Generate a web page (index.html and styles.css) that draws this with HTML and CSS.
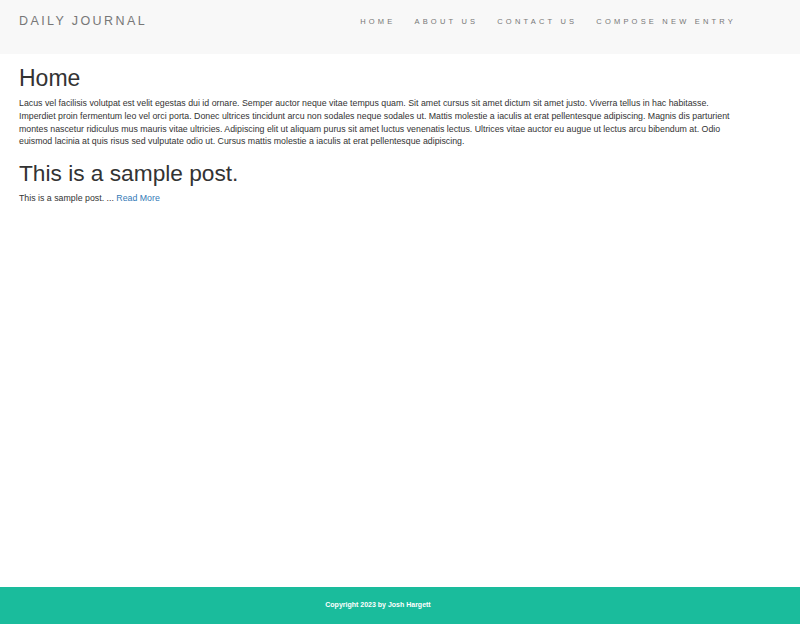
FILE: index.html
```html
<!DOCTYPE html>
<html lang="en">
  <head>
    <meta charset="UTF-8" />
    <title>Daily Journal</title>
    <link rel="stylesheet" href="styles.css">
  </head>
  <body>
    <nav class="navbar">
      <a class="brand" href="#">DAILY JOURNAL</a>
      <ul class="nav-links">
        <li><a href="#">HOME</a></li>
        <li><a href="#">ABOUT US</a></li>
        <li><a href="#">CONTACT US</a></li>
        <li><a href="#">COMPOSE NEW ENTRY</a></li>
      </ul>
    </nav>

    <div class="container">
      <h1>Home</h1>
      <p>Lacus vel facilisis volutpat est velit egestas dui id ornare. Semper auctor neque vitae tempus quam. Sit amet cursus sit amet dictum sit amet justo. Viverra tellus in hac habitasse. Imperdiet proin fermentum leo vel orci porta. Donec ultrices tincidunt arcu non sodales neque sodales ut. Mattis molestie a iaculis at erat pellentesque adipiscing. Magnis dis parturient montes nascetur ridiculus mus mauris vitae ultricies. Adipiscing elit ut aliquam purus sit amet luctus venenatis lectus. Ultrices vitae auctor eu augue ut lectus arcu bibendum at. Odio euismod lacinia at quis risus sed vulputate odio ut. Cursus mattis molestie a iaculis at erat pellentesque adipiscing.</p>

      <!-- posts -->
      <h1 class="post-title">This is a sample post.</h1>
      <p class="post-body">This is a sample post. ... <a href="#">Read More</a></p>
    </div>

    <footer>
      <p>Copyright 2023 by Josh Hargett</p>
    </footer>
  </body>
</html>
```

FILE: styles.css
```css
body {
  margin: 0;
  font-family: "Liberation Sans", Arial, sans-serif;
  font-size: 8.8px;
  line-height: 12.8px;
  color: #333;
  background-color: #fff;
  height: 624px;
  display: flex;
  flex-direction: column;
}

a {
  text-decoration: none;
}

.navbar {
  background-color: #f8f8f8;
  height: 54px;
  display: flex;
  justify-content: space-between;
  padding: 0 64px 0 19px;
}

.brand {
  color: #777;
  font-size: 12.5px;
  letter-spacing: 2.4px;
  line-height: 43px;
}

.nav-links {
  list-style: none;
  margin: 0;
  padding: 0;
  display: flex;
  gap: 19px;
}

.nav-links a {
  color: #777;
  font-size: 7.5px;
  letter-spacing: 3.2px;
  line-height: 43px;
}

.container {
  flex: 1;
  padding: 0 19px;
  max-width: 722px;
}

h1 {
  font-weight: 400;
  font-size: 23px;
  line-height: 26px;
  margin: 11px 0 6px;
}

.post-title {
  font-size: 22.7px;
  margin-top: 12px;
}

.post-body {
  margin-top: 1px;
}

p {
  margin: 0 0 6px;
}

.container a {
  color: #337ab7;
}

footer {
  background-color: #1abc9c;
  height: 37px;
  display: flex;
  justify-content: center;
  align-items: center;
  padding-right: 44px;
}

footer p {
  margin: 0;
  color: #fff;
  font-weight: bold;
  font-size: 7px;
}
```
